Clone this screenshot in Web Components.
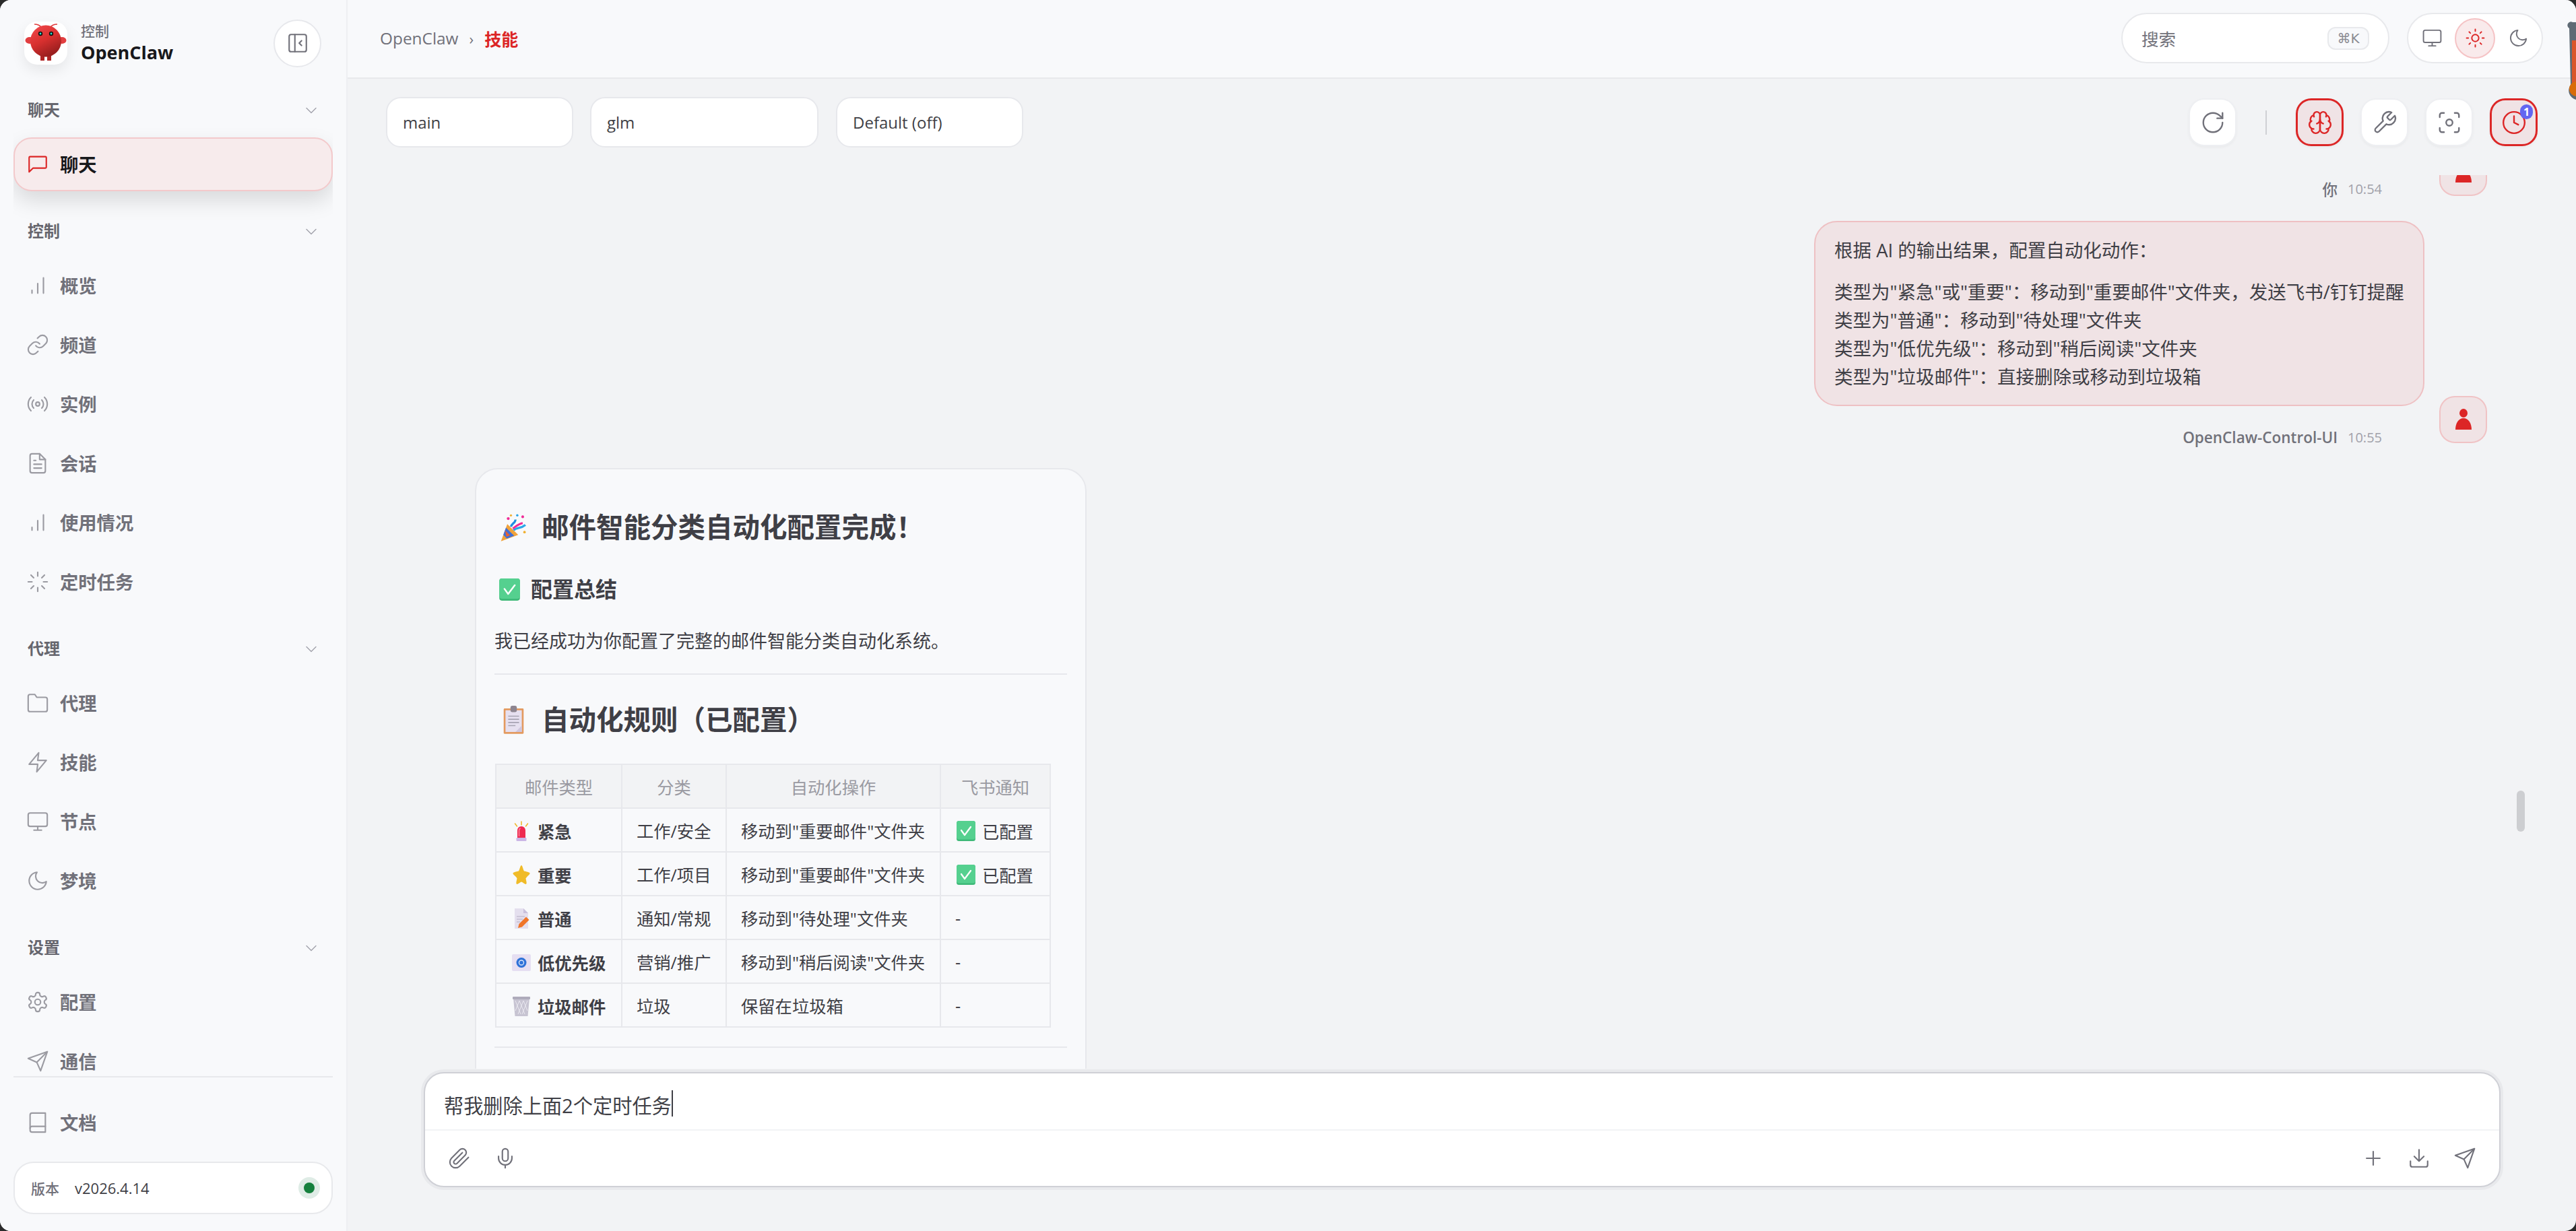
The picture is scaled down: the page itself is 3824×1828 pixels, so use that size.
<!DOCTYPE html>
<html lang="zh-CN">
<head>
<meta charset="utf-8">
<title>OpenClaw</title>
<style>
  html, body { margin: 0; height: 100%; background: #2b2b2b; overflow: hidden; }
  body { font-family: "Open Sans", "Noto Sans CJK SC", sans-serif; color: #3f3f46; }
</style>
</head>
<body>
<oc-app>
  <oc-sidebar slot="side">
    <oc-nav-group label="聊天" slot="nav">
      <oc-nav-item icon="chat" active>聊天</oc-nav-item>
    </oc-nav-group>
    <oc-nav-group label="控制" slot="nav">
      <oc-nav-item icon="bars">概览</oc-nav-item>
      <oc-nav-item icon="link">频道</oc-nav-item>
      <oc-nav-item icon="radio">实例</oc-nav-item>
      <oc-nav-item icon="file">会话</oc-nav-item>
      <oc-nav-item icon="bars">使用情况</oc-nav-item>
      <oc-nav-item icon="loader">定时任务</oc-nav-item>
    </oc-nav-group>
    <oc-nav-group label="代理" slot="nav">
      <oc-nav-item icon="folder">代理</oc-nav-item>
      <oc-nav-item icon="zap">技能</oc-nav-item>
      <oc-nav-item icon="monitor">节点</oc-nav-item>
      <oc-nav-item icon="moon">梦境</oc-nav-item>
    </oc-nav-group>
    <oc-nav-group label="设置" slot="nav">
      <oc-nav-item icon="gear">配置</oc-nav-item>
      <oc-nav-item icon="send">通信</oc-nav-item>
    </oc-nav-group>
    <oc-nav-item icon="book" slot="foot">文档</oc-nav-item>
  </oc-sidebar>
  <oc-topbar slot="top"></oc-topbar>
  <oc-toolbar slot="top"></oc-toolbar>
  <oc-thread slot="thread">
    <oc-user-msg who="你" time="10:54" class="tail"></oc-user-msg>
    <oc-user-msg who="OpenClaw-Control-UI" time="10:55">
      <p>根据 AI 的输出结果，配置自动化动作：</p>
      <div>类型为"紧急"或"重要"：移动到"重要邮件"文件夹，发送飞书/钉钉提醒</div>
      <div>类型为"普通"：移动到"待处理"文件夹</div>
      <div>类型为"低优先级"：移动到"稍后阅读"文件夹</div>
      <div>类型为"垃圾邮件"：直接删除或移动到垃圾箱</div>
    </oc-user-msg>
    <oc-reply></oc-reply>
  </oc-thread>
  <oc-composer slot="composer">帮我删除上面2个定时任务</oc-composer>
</oc-app>
<oc-gauge></oc-gauge>

<script>
const ICONS = {
  chat: '<path d="M21 15a1 1 0 0 1-1 1H7l-4 4V5a1 1 0 0 1 1-1h16a1 1 0 0 1 1 1z"/>',
  bars: '<path d="M12 20V10M18 20V4M6 20v-3"/>',
  link: '<path d="M10 13a5 5 0 0 0 7.54.54l3-3a5 5 0 0 0-7.07-7.07l-1.72 1.71"/><path d="M14 11a5 5 0 0 0-7.54-.54l-3 3a5 5 0 0 0 7.07 7.07l1.71-1.71"/>',
  radio: '<circle cx="12" cy="12" r="2"/><path d="M4.93 19.07a10 10 0 0 1 0-14.14M7.76 16.24a6 6 0 0 1 0-8.49M16.24 7.76a6 6 0 0 1 0 8.49M19.07 4.93a10 10 0 0 1 0 14.14"/>',
  file: '<path d="M14 2H6a2 2 0 0 0-2 2v16a2 2 0 0 0 2 2h12a2 2 0 0 0 2-2V8z"/><path d="M14 2v6h6M16 13H8M16 17H8M10 9H8"/>',
  loader: '<path d="M12 2v4M12 18v4M4.93 4.93l2.83 2.83M16.24 16.24l2.83 2.83M2 12h4M18 12h4M4.93 19.07l2.83-2.83M16.24 7.76l2.83-2.83"/>',
  folder: '<path d="M22 19a2 2 0 0 1-2 2H4a2 2 0 0 1-2-2V5a2 2 0 0 1 2-2h5l2 3h9a2 2 0 0 1 2 2z"/>',
  zap: '<path d="M13 2 3 14h9l-1 8 10-12h-9z"/>',
  monitor: '<rect x="2" y="3" width="20" height="14" rx="2"/><path d="M8 21h8M12 17v4"/>',
  moon: '<path d="M21 12.79A9 9 0 1 1 11.21 3 7 7 0 0 0 21 12.79z"/>',
  gear: '<path d="M12.22 2h-.44a2 2 0 0 0-2 2v.18a2 2 0 0 1-1 1.73l-.43.25a2 2 0 0 1-2 0l-.15-.08a2 2 0 0 0-2.73.73l-.22.38a2 2 0 0 0 .73 2.73l.15.1a2 2 0 0 1 1 1.72v.51a2 2 0 0 1-1 1.74l-.15.09a2 2 0 0 0-.73 2.73l.22.38a2 2 0 0 0 2.73.73l.15-.08a2 2 0 0 1 2 0l.43.25a2 2 0 0 1 1 1.73V20a2 2 0 0 0 2 2h.44a2 2 0 0 0 2-2v-.18a2 2 0 0 1 1-1.73l.43-.25a2 2 0 0 1 2 0l.15.08a2 2 0 0 0 2.73-.73l.22-.39a2 2 0 0 0-.73-2.73l-.15-.08a2 2 0 0 1-1-1.74v-.5a2 2 0 0 1 1-1.74l.15-.09a2 2 0 0 0 .73-2.73l-.22-.38a2 2 0 0 0-2.73-.73l-.15.08a2 2 0 0 1-2 0l-.43-.25a2 2 0 0 1-1-1.73V4a2 2 0 0 0-2-2z"/><circle cx="12" cy="12" r="3"/>',
  send: '<path d="m22 2-7 20-4-9-9-4Z"/><path d="M22 2 11 13"/>',
  book: '<path d="M4 4a2 2 0 0 1 2-2h14v20H6a2 2 0 0 1-2-2z"/><path d="M4 18a2 2 0 0 1 2-2h14"/>',
  chevron: '<path d="m6 9 6 6 6-6"/>',
  panel: '<rect x="3" y="3" width="18" height="18" rx="2"/><path d="M9 3v18M16 14.5 13.5 12l2.5-2.5"/>',
  sun: '<circle cx="12" cy="12" r="4"/><path d="M12 2v2M12 20v2M4.93 4.93l1.41 1.41M17.66 17.66l1.41 1.41M2 12h2M20 12h2M6.34 17.66l-1.41 1.41M19.07 4.93l-1.41 1.41"/>',
  refresh: '<path d="M21 12a9 9 0 1 1-9-9c2.52 0 4.93 1 6.74 2.74L21 8"/><path d="M21 3v5h-5"/>',
  brain: '<path d="M12 5a3 3 0 1 0-5.997.125 4 4 0 0 0-2.526 5.77 4 4 0 0 0 .556 6.588A4 4 0 1 0 12 18Z"/><path d="M12 5a3 3 0 1 1 5.997.125 4 4 0 0 1 2.526 5.77 4 4 0 0 1-.556 6.588A4 4 0 1 1 12 18Z"/><path d="M15 13a4.5 4.5 0 0 1-3-4 4.5 4.5 0 0 1-3 4M17.599 6.5a3 3 0 0 0 .399-1.375M6.003 5.125A3 3 0 0 0 6.401 6.5M3.477 10.896a4 4 0 0 1 .585-.396M19.938 10.5a4 4 0 0 1 .585.396M6 18a4 4 0 0 1-1.967-.516M19.967 17.484A4 4 0 0 1 18 18"/>',
  wrench: '<path d="M14.7 6.3a1 1 0 0 0 0 1.4l1.6 1.6a1 1 0 0 0 1.4 0l3.77-3.77a6 6 0 0 1-7.94 7.94l-6.91 6.91a2.12 2.12 0 0 1-3-3l6.91-6.91a6 6 0 0 1 7.94-7.94l-3.76 3.76z"/>',
  focus: '<path d="M3 7V5a2 2 0 0 1 2-2h2M17 3h2a2 2 0 0 1 2 2v2M21 17v2a2 2 0 0 1-2 2h-2M7 21H5a2 2 0 0 1-2-2v-2"/><circle cx="12" cy="12" r="3"/>',
  clock: '<circle cx="12" cy="12" r="10"/><path d="M12 6v6l4 2"/>',
  clip: '<path d="m21.44 11.05-9.19 9.19a6 6 0 0 1-8.49-8.49l8.57-8.57A4 4 0 1 1 18 8.84l-8.59 8.57a2 2 0 0 1-2.83-2.83l8.49-8.48"/>',
  mic: '<path d="M12 2a3 3 0 0 0-3 3v7a3 3 0 0 0 6 0V5a3 3 0 0 0-3-3Z"/><path d="M19 10v2a7 7 0 0 1-14 0v-2M12 19v3"/>',
  plus: '<path d="M5 12h14M12 5v14"/>',
  download: '<path d="M21 15v4a2 2 0 0 1-2 2H5a2 2 0 0 1-2-2v-4"/><path d="m7 10 5 5 5-5M12 15V3"/>'
};

// emoji pictures, there is no colour emoji font to lean on
const EMOJI = {
  party: '<path d="M2 31 9 12l12 12z" fill="#f0a23a"/><path d="M4.6 24 7.5 16l9 9-8 3z" fill="#3f6fd8"/><path d="M6.5 19 12 24.500 8 26z" fill="#e8612c"/><path d="M13 15c1-4 5-4 5-8" fill="none" stroke="#1f8fe0" stroke-width="2.400"/><path d="M16 19c3-4 7-1 13-6" fill="none" stroke="#2aa5e8" stroke-width="2.400"/><path d="M15 17c3-2 6-5 11-6" fill="none" stroke="#f02a96" stroke-width="2.200"/><circle cx="10" cy="6" r="1.600" fill="#f02a96"/><circle cx="13" cy="2.500" r="1.200" fill="#f0b030"/><circle cx="26" cy="4" r="1.500" fill="#f02a96"/><circle cx="28" cy="21" r="1.400" fill="#f0b030"/><circle cx="20" cy="2.500" r="1.300" fill="#2aa5e8"/>',
  check: '<rect x="2" y="1" width="28" height="30" rx="3.500" fill="#3eb978"/><rect x="2" y="1" width="28" height="27.500" rx="3.500" fill="#55d08f"/><path d="m9 15 5 7 9-12" fill="none" stroke="#fff" stroke-width="2.200" stroke-linecap="round" stroke-linejoin="round"/>',
  board: '<rect x="5" y="3" width="22" height="28" rx="1" fill="#e39a5f"/><rect x="7" y="5" width="18" height="24" fill="#e6e0f0"/><rect x="12.500" y="0" width="7" height="7" rx="2" fill="#8d8590"/><path d="M10 11.500h12M10 15h12M10 18.500h12M10 22h8" stroke="#a7a3b2" stroke-width="1.200"/><path d="M18 29l7-7v7z" fill="#cfc6de"/>',
  siren: '<path d="M10 27V15a6 6 0 0 1 12 0v12z" fill="#ee2a50"/><path d="M12.500 24V15a3.500 3.500 0 0 1 2-3" stroke="#ff8aa0" stroke-width="1.400" fill="none"/><rect x="8.500" y="26" width="15" height="5" rx="1.200" fill="#cbb6e6"/><path d="M16 2v5M6.500 5l3 4M25.500 5l-3 4" stroke="#f0b422" stroke-width="1.500" stroke-linecap="round"/>',
  star: '<path d="M16 2c1.500 0 2.200 5 4 8.500 3 .8 8 1.500 8.500 3.200.4 1.500-4.500 5-6 7.500.3 3 2 7.500.6 8.500-1.300 1-5-2.500-7.100-3.200-2.100.7-5.800 4.200-7.100 3.200-1.400-1 .3-5.500.6-8.500-1.500-2.500-6.400-6-6-7.500C4 12 9 11.300 12 10.500 13.800 7 14.500 2 16 2z" fill="#f0bb28"/>',
  memo: '<path d="M6 1h13l7 7v23H6z" fill="#e4dfee"/><path d="m19 1 7 7h-7z" fill="#c9c0dc"/><path d="M9 13h12M9 17h9M9 21h5" stroke="#b4adc2" stroke-width="1"/><path d="m11 30 1.500-6L23 13.500l4.500 4.500L17 28.500z" fill="#f0762a"/>',
  mail: '<rect x="2" y="4" width="28" height="25" rx="2" fill="#e6dff2"/><circle cx="16" cy="16.500" r="7.500" fill="#2f72d8"/><circle cx="16" cy="16.500" r="3.500" fill="none" stroke="#dfe9fb" stroke-width="1.300"/>',
  bin: '<path d="M4 4h24l-2.500 27h-19z" fill="#c7c4d2"/><path d="M7 8l8 20M13 8l8 20M19 8l6 15M25 8l-8 20M19 8l-8 20M13 8 7 23" stroke="#ecebf2" stroke-width=".9"/><rect x="3" y="2" width="26" height="4" rx="1" fill="#aeabbb"/>'
};

const svgIcon = (name, size, width = 1.5) =>
  `<svg xmlns="http://www.w3.org/2000/svg" width="${size}" height="${size}" viewBox="0 0 24 24" fill="none" stroke="currentColor" stroke-width="${width}" stroke-linecap="round" stroke-linejoin="round">${ICONS[name]}</svg>`;

class OcEmoji extends HTMLElement {
  connectedCallback() {
    const size = this.getAttribute("size") || 32;
    this.attachShadow({ mode: "open" }).innerHTML = `
      <style>:host { display: inline-flex; vertical-align: middle; } svg { display: block; }</style>
      <svg xmlns="http://www.w3.org/2000/svg" width="${size}" height="${size}" viewBox="0 0 32 32">${EMOJI[this.getAttribute("name")]}</svg>`;
  }
}

const appTemplate = document.createElement("template");
appTemplate.innerHTML = `
  <style>
    :host { display: grid; grid-template-columns: 516px 1fr; height: 100vh; border-radius: 16px; overflow: hidden; background: #f2f3f5; }
    .main { display: flex; flex-direction: column; min-width: 0; min-height: 0; }
    .thread { flex: 1; min-height: 0; display: flex; }
    ::slotted(oc-thread) { flex: 1; }
  </style>
  <slot name="side"></slot>
  <div class="main">
    <slot name="top"></slot>
    <div class="thread"><slot name="thread"></slot></div>
    <slot name="composer"></slot>
  </div>
`;
class OcApp extends HTMLElement {
  constructor() {
    super();
    this.attachShadow({ mode: "open" }).appendChild(appTemplate.content.cloneNode(true));
  }
}

const sidebarTemplate = document.createElement("template");
sidebarTemplate.innerHTML = `
  <style>
    :host { display: flex; flex-direction: column; height: 100vh; box-sizing: border-box; background: #f8f9fb; border-right: 2px solid #eeeff2; }
    .head { flex: none; height: 128px; box-sizing: border-box; padding: 0 37px 0 36px; display: flex; align-items: center; gap: 20px; }
    .logo { width: 64px; height: 64px; border-radius: 19px; background: #fff; box-shadow: 0 8px 20px rgba(0,0,0,.08); flex: none; }
    .logo svg { display: block; }
    .brand { flex: 1; display: flex; flex-direction: column; }
    .brand small { font-size: 21px; line-height: 28px; font-weight: 500; color: #71717a; }
    .brand b { font-size: 27px; line-height: 36px; font-weight: 700; color: #18181b; }
    .collapse { width: 71px; height: 71px; box-sizing: border-box; border-radius: 50%; background: #fff; border: 2px solid #e7e8ec; color: #71717a; display: flex; align-items: center; justify-content: center; }
    nav { flex: 1; min-height: 0; overflow: hidden; margin: 12px 20px 0; display: flex; flex-direction: column; gap: 36px; }
    .foot { flex: none; margin: 0 20px 25px; padding-top: 27px; border-top: 2px solid #e8e9ec; display: flex; flex-direction: column; gap: 18px; }
    .version { height: 78px; box-sizing: border-box; border: 2px solid #e8e9ec; border-radius: 30px; background: #fff; display: flex; align-items: center; padding: 0 17px 0 24px; }
    .version span { font-size: 21px; font-weight: 500; color: #71717a; }
    .version code { font: 500 22px "Open Sans", sans-serif; color: #3f3f46; margin-left: 23px; flex: 1; }
    .dot { width: 16px; height: 16px; border-radius: 50%; background: #15803d; box-shadow: 0 0 0 8px #dfece6; margin-right: 8px; }
  </style>
  <div class="head">
    <div class="logo">
      <svg width="64" height="64" viewBox="0 0 64 64">
        <defs><linearGradient id="shell" x1="0" y1="0" x2=".5" y2="1"><stop offset="0" stop-color="#f24a4e"/><stop offset=".55" stop-color="#d8302f"/><stop offset="1" stop-color="#9a1f1f"/></linearGradient></defs>
        <path d="M26 9C23 5 20 4 15 4M38 9c3-4 6-5 11-5" fill="none" stroke="#e0393b" stroke-width="1.500"/>
        <rect x="24" y="48" width="6" height="10" fill="#b02424"/><rect x="34" y="48" width="6" height="10" fill="#b02424"/>
        <ellipse cx="8" cy="28" rx="6.500" ry="5" fill="#e23e40"/><ellipse cx="56" cy="28" rx="6.500" ry="5" fill="#e23e40"/>
        <ellipse cx="32" cy="29" rx="23" ry="23.500" fill="url(#shell)"/>
        <circle cx="24" cy="18" r="3.200" fill="#111"/><circle cx="40" cy="18" r="3.200" fill="#111"/>
        <circle cx="24" cy="18" r="1.400" fill="#2ee6d6"/><circle cx="40" cy="18" r="1.400" fill="#2ee6d6"/>
      </svg>
    </div>
    <div class="brand"><small>控制</small><b>OpenClaw</b></div>
    <div class="collapse">${svgIcon("panel", 34)}</div>
  </div>
  <nav><slot name="nav"></slot></nav>
  <div class="foot">
    <slot name="foot"></slot>
    <div class="version"><span>版本</span><code>v2026.4.14</code><i class="dot"></i></div>
  </div>
`;
class OcSidebar extends HTMLElement {
  constructor() {
    super();
    this.attachShadow({ mode: "open" }).appendChild(sidebarTemplate.content.cloneNode(true));
  }
}

class OcNavGroup extends HTMLElement {
  constructor() {
    super();
    this.attachShadow({ mode: "open" }).innerHTML = `
      <style>
        :host { display: block; flex: none; }
        .label { height: 48px; display: flex; align-items: center; justify-content: space-between; padding: 0 18px 0 21px; font-size: 24px; font-weight: 700; color: #66666e; }
        .label span { margin-top: -5px; }
        .label svg { color: #a1a1aa; }
        .items { margin-top: 16px; display: flex; flex-direction: column; gap: 8px; clip-path: inset(-14px 0 -69px 0); }
      </style>
      <div class="label"><span>${this.getAttribute("label")}</span>${svgIcon("chevron", 28, 1.2)}</div>
      <div class="items"><slot></slot></div>`;
  }
}

class OcNavItem extends HTMLElement {
  constructor() {
    super();
    const active = this.hasAttribute("active");
    this.attachShadow({ mode: "open" }).innerHTML = `
      <style>
        :host { display: flex; align-items: center; gap: 16px; height: 80px; box-sizing: border-box; padding-left: 17px; border: 2px solid transparent; border-radius: 27px; font-size: 27.300px; font-weight: 700; color: #71717a; }
        :host([active]) { background: #f7ebec; border-color: #f3c9cb; color: #18181b; box-shadow: 0 14px 32px rgba(0,0,0,.13); }
        svg { flex: none; color: ${active ? "#dc2626" : "#9b9ba2"}; }
        span { margin-top: -3px; }
      </style>
      ${svgIcon(this.getAttribute("icon"), 34)}<span><slot></slot></span>`;
  }
}

const topbarTemplate = document.createElement("template");
topbarTemplate.innerHTML = `
  <style>
    :host { display: flex; align-items: center; height: 117px; box-sizing: border-box; padding: 0 49px 2px 48px; background: #f8f9fb; border-bottom: 2px solid #e8e9ec; }
    .crumb { flex: 1; display: flex; align-items: center; font-size: 24.400px; color: #71717a; }
    .crumb i { font-style: normal; margin: 0 16px; font-size: 22px; }
    .crumb b { color: #dc2626; font-weight: 700; font-size: 25px; }
    .search { width: 398px; height: 75px; box-sizing: border-box; border: 2px solid #e8e9ec; border-radius: 38px; background: #fff; display: flex; align-items: center; justify-content: space-between; padding: 0 28px; font-size: 25.500px; color: #71717a; }
    kbd { font: 20px "DejaVu Sans", sans-serif; width: 62px; height: 34px; box-sizing: border-box; border: 2px solid #e8e9ec; border-radius: 12px; background: #f8f9fb; color: #8b8b92; display: flex; align-items: center; justify-content: center; }
    .theme { margin-left: 26px; width: 202px; height: 75px; box-sizing: border-box; border: 2px solid #e8e9ec; border-radius: 38px; background: #fff; display: flex; align-items: center; gap: 4px; padding-left: 5px; color: #71717a; }
    .theme span { width: 60px; height: 60px; box-sizing: border-box; border-radius: 50%; display: flex; align-items: center; justify-content: center; }
    .theme .on { background: #f9eaeb; border: 2px solid #f5c3c5; color: #dc2626; }
  </style>
  <div class="crumb"><span>OpenClaw</span><i>›</i><b>技能</b></div>
  <div class="search"><span>搜索</span><kbd>⌘K</kbd></div>
  <div class="theme">
    <span>${svgIcon("monitor", 31)}</span>
    <span class="on">${svgIcon("sun", 31)}</span>
    <span>${svgIcon("moon", 31)}</span>
  </div>
`;
class OcTopbar extends HTMLElement {
  constructor() {
    super();
    this.attachShadow({ mode: "open" }).appendChild(topbarTemplate.content.cloneNode(true));
  }
}

class OcIconBtn extends HTMLElement {
  constructor() {
    super();
    this.attachShadow({ mode: "open" }).innerHTML = `
      <style>
        :host { position: relative; display: flex; align-items: center; justify-content: center; width: 71px; height: 71px; box-sizing: border-box; border: 2px solid #eeeff2; border-radius: 23px; background: #fff; color: #71717a; box-shadow: 0 2px 4px rgba(0,0,0,.04); }
        :host([on]) { background: #f0e3e5; border: 3px solid #dc2626; color: #dc2626; }
        .badge { position: absolute; top: 6px; right: 4px; width: 19px; height: 22px; border-radius: 11px; background: #6366f1; color: #fff; font: 700 16px/22px "Open Sans", sans-serif; text-align: center; }
      </style>
      ${svgIcon(this.getAttribute("icon"), 38)}
      ${this.hasAttribute("badge") ? `<span class="badge">${this.getAttribute("badge")}</span>` : ""}`;
  }
}

const toolbarTemplate = document.createElement("template");
toolbarTemplate.innerHTML = `
  <style>
    :host { display: flex; align-items: center; height: 143px; box-sizing: border-box; padding: 27px 57px 41px; }
    .pick { height: 75px; box-sizing: border-box; border: 2px solid #e7e8ec; border-radius: 22px; background: #fff; display: flex; align-items: center; padding-left: 23px; font-size: 24px; color: #3f3f46; margin-right: 25px; }
    .tools { margin-left: auto; display: flex; align-items: center; gap: 25px; }
    .sep { width: 2px; height: 36px; background: #cfd0d4; margin: 0 18px; }
  </style>
  <div class="pick" style="width:278px">main</div>
  <div class="pick" style="width:339px;margin-right:26px">glm</div>
  <div class="pick" style="width:278px">Default (off)</div>
  <div class="tools">
    <oc-icon-btn icon="refresh"></oc-icon-btn>
    <span class="sep"></span>
    <oc-icon-btn icon="brain" on></oc-icon-btn>
    <oc-icon-btn icon="wrench"></oc-icon-btn>
    <oc-icon-btn icon="focus"></oc-icon-btn>
    <oc-icon-btn icon="clock" on badge="1"></oc-icon-btn>
  </div>
`;
class OcToolbar extends HTMLElement {
  constructor() {
    super();
    this.attachShadow({ mode: "open" }).appendChild(toolbarTemplate.content.cloneNode(true));
  }
}

class OcThread extends HTMLElement {
  constructor() {
    super();
    this.attachShadow({ mode: "open" }).innerHTML = `
      <style>
        :host { display: block; position: relative; overflow: hidden; min-height: 0; }
        .flow { display: flex; flex-direction: column; gap: 31px; }
        .thumb { position: absolute; right: 76px; top: 914px; width: 12px; height: 61px; border-radius: 6px; background: #cdced1; }
      </style>
      <div class="flow"><slot></slot></div>
      <div class="thumb"></div>`;
  }
}

class OcUserMsg extends HTMLElement {
  constructor() {
    super();
    const bubble = this.classList.contains("tail") ? "" : `<div class="bubble"><slot></slot></div>`;
    this.attachShadow({ mode: "open" }).innerHTML = `
      <style>
        :host { display: flex; justify-content: flex-end; align-items: flex-end; gap: 22px; padding-right: 132px; font-size: 27.500px; }
        :host(.tail) { margin-top: -39px; }
        .col { display: flex; flex-direction: column; align-items: flex-end; }
        .bubble { width: 906px; box-sizing: border-box; padding: 21px 28px 20px; border: 2px solid #eec0c3; border-radius: 34px; background: #f0e3e5; line-height: 42px; color: #3f3f46; }
        ::slotted(p) { margin: 0 0 20px; }
        .meta { height: 30px; box-sizing: border-box; margin-top: 31px; padding-right: 63px; display: flex; align-items: center; gap: 15px; font-size: 22.500px; font-weight: 600; color: #71717a; }
        .meta time { font-size: 20px; font-weight: 400; color: #a1a1aa; }
        .avatar { width: 71px; height: 70px; box-sizing: border-box; margin-bottom: 6px; border: 2px solid #f0c3c5; border-radius: 23px; background: #f0e3e5; display: flex; align-items: center; justify-content: center; }
        .avatar svg { display: block; }
        :host(.tail) .meta { margin-top: 0; padding-bottom: 4px; font-weight: 500; }
      </style>
      <div class="col">
        ${bubble}
        <div class="meta"><span>${this.getAttribute("who")}</span><time>${this.getAttribute("time")}</time></div>
      </div>
      <div class="avatar">
        <svg width="30" height="34" viewBox="0 0 30 34"><ellipse cx="15" cy="7.500" rx="6" ry="6.500" fill="#dc2626"/><path d="M3 32C3 22 8 15 15 15s12 7 12 17z" fill="#dc2626"/></svg>
      </div>`;
  }
}

const tableTemplate = document.createElement("template");
tableTemplate.innerHTML = `
  <style>
    :host { display: block; }
    table { border-collapse: collapse; table-layout: fixed; width: 823px; font-size: 25.300px; color: #3f3f46; }
    th, td { border: 2px solid #e7e8ec; height: 65px; box-sizing: border-box; padding: 0 21px; white-space: nowrap; }
    th { background: #f2f3f5; color: #9a9aa2; font-weight: 400; text-align: center; }
    td b { font-weight: 700; margin-left: 8px; vertical-align: middle; }
    td span { margin-left: 8px; vertical-align: middle; }
  </style>
  <table>
    <colgroup><col style="width:187px"><col style="width:155px"><col style="width:318px"><col style="width:163px"></colgroup>
    <tr><th>邮件类型</th><th>分类</th><th>自动化操作</th><th>飞书通知</th></tr>
    <tr><td><oc-emoji name="siren" size="32"></oc-emoji><b>紧急</b></td><td>工作/安全</td><td>移动到"重要邮件"文件夹</td><td><oc-emoji name="check" size="32"></oc-emoji><span>已配置</span></td></tr>
    <tr><td><oc-emoji name="star" size="32"></oc-emoji><b>重要</b></td><td>工作/项目</td><td>移动到"重要邮件"文件夹</td><td><oc-emoji name="check" size="32"></oc-emoji><span>已配置</span></td></tr>
    <tr><td><oc-emoji name="memo" size="32"></oc-emoji><b>普通</b></td><td>通知/常规</td><td>移动到"待处理"文件夹</td><td>-</td></tr>
    <tr><td><oc-emoji name="mail" size="32"></oc-emoji><b>低优先级</b></td><td>营销/推广</td><td>移动到"稍后阅读"文件夹</td><td>-</td></tr>
    <tr><td><oc-emoji name="bin" size="32"></oc-emoji><b>垃圾邮件</b></td><td>垃圾</td><td>保留在垃圾箱</td><td>-</td></tr>
  </table>
`;
class OcRuleTable extends HTMLElement {
  constructor() {
    super();
    this.attachShadow({ mode: "open" }).appendChild(tableTemplate.content.cloneNode(true));
  }
}

const replyTemplate = document.createElement("template");
replyTemplate.innerHTML = `
  <style>
    :host { display: block; width: 908px; box-sizing: border-box; margin-left: 189px; padding: 60px 27px 70px; border: 2px solid #e7e8ec; border-radius: 34px; background: #f8f9fb; color: #3f3f46; font-size: 27px; }
    h1, h2, p, hr { margin: 0; }
    h1 { font-size: 40.500px; line-height: 52px; font-weight: 700; display: flex; align-items: center; }
    h1 oc-emoji { margin-right: 20px; margin-left: 7px; }
    h2 { font-size: 32px; line-height: 42px; font-weight: 700; margin-top: 45px; display: flex; align-items: center; gap: 14px; }
    h2 oc-emoji { margin-left: 5px; }
    p { line-height: 42px; margin-top: 35px; }
    hr { border: 0; height: 2px; background: #e7e8ec; margin-top: 27px; }
    h1.next { margin-top: 41px; }
    oc-rule-table { margin: 39px 0 28px 1px; }
  </style>
  <h1><oc-emoji name="party" size="43"></oc-emoji>邮件智能分类自动化配置完成！</h1>
  <h2><oc-emoji name="check" size="35"></oc-emoji>配置总结</h2>
  <p>我已经成功为你配置了完整的邮件智能分类自动化系统。</p>
  <hr>
  <h1 class="next"><oc-emoji name="board" size="43"></oc-emoji>自动化规则（已配置）</h1>
  <oc-rule-table></oc-rule-table>
  <hr>
`;
class OcReply extends HTMLElement {
  constructor() {
    super();
    this.attachShadow({ mode: "open" }).appendChild(replyTemplate.content.cloneNode(true));
  }
}

const composerTemplate = document.createElement("template");
composerTemplate.innerHTML = `
  <style>
    :host { display: block; flex: none; height: 236px; box-sizing: border-box; padding: 0 112px 65px 113px; margin-top: 5px; }
    .box { height: 171px; box-sizing: border-box; border: 2px solid #cfd0d6; border-radius: 30px; background: #fff; box-shadow: 0 0 0 4px #e8e9ec; display: flex; flex-direction: column; }
    .input { height: 85px; box-sizing: border-box; border-bottom: 2px solid #f2f3f5; padding: 9px 28px 0; display: flex; align-items: center; font-size: 29.200px; color: #3f3f46; }
    .caret { width: 2px; height: 39px; background: #3f3f46; flex: none; margin-top: -4px; }
    .tools { flex: 1; display: flex; align-items: center; padding: 0 34px; color: #71717a; gap: 34px; }
    .tools svg { display: block; }
    .push { margin-left: auto; }
  </style>
  <div class="box">
    <div class="input"><span><slot></slot></span><i class="caret"></i></div>
    <div class="tools">
      ${svgIcon("clip", 34)}${svgIcon("mic", 34)}
      <span class="push"></span>
      ${svgIcon("plus", 34)}${svgIcon("download", 34)}${svgIcon("send", 34)}
    </div>
  </div>
`;
class OcComposer extends HTMLElement {
  constructor() {
    super();
    this.attachShadow({ mode: "open" }).appendChild(composerTemplate.content.cloneNode(true));
  }
}

// the desktop widget that peeks in over the window's right edge
class OcGauge extends HTMLElement {
  constructor() {
    super();
    this.attachShadow({ mode: "open" }).innerHTML = `
      <style>:host { position: fixed; right: 0; top: 30px; width: 16px; height: 120px; } svg { display: block; }</style>
      <svg width="16" height="120" viewBox="0 0 16 120">
        <path d="M6 12a5 5 0 0 1 5-9h5v115H16a14 14 0 0 1-8-22z" fill="#5f6b75"/>
        <rect x="10" y="30" width="6" height="75" fill="#d9562a"/>
        <circle cx="17" cy="102" r="11" fill="#d96c0a"/>
      </svg>`;
  }
}

customElements.define("oc-emoji", OcEmoji);
customElements.define("oc-nav-group", OcNavGroup);
customElements.define("oc-nav-item", OcNavItem);
customElements.define("oc-sidebar", OcSidebar);
customElements.define("oc-topbar", OcTopbar);
customElements.define("oc-icon-btn", OcIconBtn);
customElements.define("oc-toolbar", OcToolbar);
customElements.define("oc-thread", OcThread);
customElements.define("oc-user-msg", OcUserMsg);
customElements.define("oc-rule-table", OcRuleTable);
customElements.define("oc-reply", OcReply);
customElements.define("oc-composer", OcComposer);
customElements.define("oc-gauge", OcGauge);
customElements.define("oc-app", OcApp);
</script>
</body>
</html>
